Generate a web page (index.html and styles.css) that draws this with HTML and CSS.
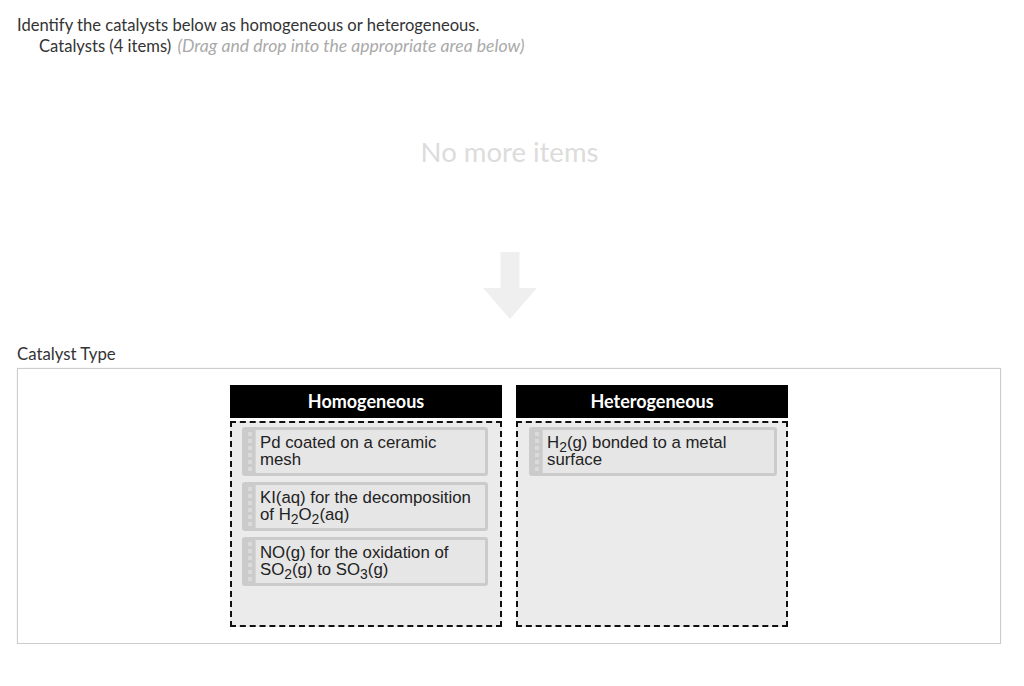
FILE: index.html
```html
<!DOCTYPE html>
<html>
<head>
<meta charset="utf-8">
<link rel="stylesheet" href="styles.css">
</head>
<body>
<div class="page">
  <div class="prompt">Identify the catalysts below as homogeneous or heterogeneous.</div>
  <div class="subprompt">Catalysts (4 items) <span class="hint">(Drag and drop into the appropriate area below)</span></div>

  <div class="source">
    <div class="empty">No more items</div>
    <svg class="arrow" width="54" height="67" viewBox="0 0 54 67">
      <polygon points="17.5,0 36.5,0 36.5,36 54,36 27,67 0,36 17.5,36" fill="#efefef"/>
    </svg>
  </div>

  <div class="label">Catalyst Type</div>
  <div class="target">
    <div class="col">
      <div class="col-head">Homogeneous</div>
      <div class="drop">
        <div class="item"><div class="grip"></div><div class="txt">Pd coated on a ceramic mesh</div></div>
        <div class="item"><div class="grip"></div><div class="txt">KI(aq) for the decomposition of H<sub>2</sub>O<sub>2</sub>(aq)</div></div>
        <div class="item"><div class="grip"></div><div class="txt">NO(g) for the oxidation of SO<sub>2</sub>(g) to SO<sub>3</sub>(g)</div></div>
      </div>
    </div>
    <div class="col">
      <div class="col-head">Heterogeneous</div>
      <div class="drop drop-r">
        <div class="item"><div class="grip"></div><div class="txt">H<sub>2</sub>(g) bonded to a metal surface</div></div>
      </div>
    </div>
  </div>
</div>
</body>
</html>
```

FILE: styles.css
```css
html, body {
  margin: 0;
  padding: 0;
  background: #fff;
}
.page {
  font-family: Lato, "Liberation Sans", sans-serif;
  color: #333;
  padding: 15px 23px 0 17px;
}
.prompt {
  font-size: 16.6px;
  line-height: 21px;
}
.subprompt {
  font-size: 16.6px;
  line-height: 21px;
  height: 21px;
  padding-left: 22px;
}
.hint {
  font-style: italic;
  color: #aaa;
  font-size: 17.6px;
  line-height: 1;
  margin-left: 2px;
}
.source {
  display: flex;
  flex-direction: column;
  align-items: center;
  padding-left: 1px;
}
.empty {
  margin-top: 79px;
  font-size: 27.5px;
  line-height: 32px;
  color: #dcdcdc;
}
.arrow {
  display: block;
  margin-top: 84px;
}
.label {
  margin-top: 25px;
  font-size: 16.8px;
  line-height: 20px;
}
.target {
  margin-top: 4px;
  border: 1px solid #ccc;
  box-shadow: 0 0 1px #ddd;
  display: flex;
  justify-content: center;
  gap: 14px;
  padding: 16px 0 16px;
}
.col {
  width: 272px;
  display: flex;
  flex-direction: column;
}
.col-head {
  background: #000;
  color: #fff;
  font-weight: bold;
  font-size: 18px;
  height: 33px;
  line-height: 33px;
  text-align: center;
}
.drop {
  margin-top: 3px;
  border: 2px dashed #111;
  background: #ebebeb;
  padding: 4px 12px 0 10px;
  box-sizing: border-box;
  height: 206px;
}
.drop-r {
  padding: 4px 9px 0 11px;
}
.item {
  display: flex;
  border: 3px solid #cbcbcb;
  border-radius: 3px;
  background: #e6e6e6;
  margin-bottom: 6px;
  height: 49px;
  box-sizing: border-box;
}
.grip {
  width: 10px;
  flex: none;
  background-color: #cbcbcb;
  background-image: repeating-linear-gradient(to bottom, #dadada 0 4px, transparent 4px 7px);
  background-size: 4px 100%;
  background-position: 3px 2px;
  background-repeat: no-repeat;
  border-right: 1px solid #d5d5d5;
}
.txt {
  font-family: "Liberation Sans", Arial, sans-serif;
  font-size: 16.8px;
  line-height: 17px;
  color: #222;
  padding: 4px 6px 0 4px;
}
.txt sub {
  font-size: 0.83em;
  line-height: 0;
  vertical-align: -0.3em;
}
```
